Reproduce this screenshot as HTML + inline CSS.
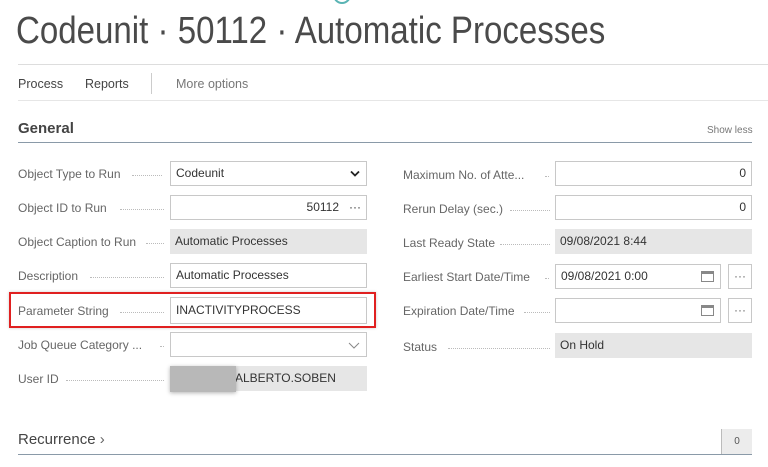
<!DOCTYPE html>
<html><head><style>
*{margin:0;padding:0;box-sizing:border-box}
body{width:768px;height:467px;background:#fff;position:relative;overflow:hidden;font-family:"Liberation Sans",sans-serif;color:#505050}
.a{position:absolute;white-space:nowrap}
.lbl{font-size:12px;color:#666;position:absolute;white-space:nowrap}
.dots{position:absolute;border-bottom:1px dotted #bbb;height:1px}
.in{position:absolute;border:1px solid #c8c8c8;background:#fff;height:25px;font-size:12px;color:#333;line-height:23px;padding:0 5px}
.ro{position:absolute;background:#e6e6e6;height:25px;font-size:12px;color:#333;line-height:25px;padding:0 5px}
.r{text-align:right}
.cal{position:absolute;right:6px;top:6px;width:13px;height:11px;border:1px solid #888;border-top:3px solid #888}
</style></head><body>
<div class="a" style="left:333px;top:-14px;width:18px;height:18px;border:2px solid #5ab4b4;border-radius:50%"></div>
<div class="a" style="left:16px;top:10px;font-size:38px;color:#4a4a4a;transform:scaleX(0.87);transform-origin:0 0">Codeunit · 50112 · Automatic Processes</div>
<div class="a" style="left:18px;top:64px;width:750px;border-top:1px solid #ddd"></div>
<div class="a" style="left:18px;top:77px;font-size:12.5px;color:#444">Process</div>
<div class="a" style="left:85px;top:77px;font-size:12.5px;color:#444">Reports</div>
<div class="a" style="left:151px;top:73px;height:21px;border-left:1px solid #ccc"></div>
<div class="a" style="left:176px;top:77px;font-size:12.5px;color:#777">More options</div>
<div class="a" style="left:18px;top:100px;width:750px;border-top:1px solid #e6e6e6"></div>
<div class="a" style="left:18px;top:120px;font-size:15px;font-weight:bold;color:#444">General</div>
<div class="a" style="left:707px;top:125px;font-size:10px;color:#777">Show less</div>
<div class="a" style="left:18px;top:142px;width:734px;border-top:1px solid #8a9aa8"></div>

<div class="lbl" style="left:18px;top:167px">Object Type to Run</div><div class="dots" style="left:132px;top:175px;width:30px"></div>
<div class="in" style="left:170px;top:161px;width:197px">Codeunit<svg style="position:absolute;right:6px;top:8px" width="10" height="7" viewBox="0 0 10 7"><path d="M1 1.5 L5 5.5 L9 1.5" fill="none" stroke="#222" stroke-width="1.8"/></svg></div>
<div class="lbl" style="left:18px;top:201px">Object ID to Run</div><div class="dots" style="left:120px;top:209px;width:44px"></div>
<div class="in r" style="left:170px;top:195px;width:197px">50112 &nbsp; ···</div>
<div class="lbl" style="left:18px;top:235px">Object Caption to Run</div><div class="dots" style="left:146px;top:243px;width:18px"></div>
<div class="ro" style="left:170px;top:229px;width:197px">Automatic Processes</div>
<div class="lbl" style="left:18px;top:269px">Description</div><div class="dots" style="left:90px;top:277px;width:74px"></div>
<div class="in" style="left:170px;top:263px;width:197px">Automatic Processes</div>
<div class="lbl" style="left:18px;top:304px">Parameter String</div><div class="dots" style="left:120px;top:312px;width:44px"></div>
<div class="in" style="left:170px;top:297px;width:197px;height:27px;line-height:25px">INACTIVITYPROCESS</div>
<div class="a" style="left:9px;top:292px;width:367px;height:36px;border:2px solid #e02020;box-shadow:0 0 3px rgba(0,0,0,.2)"></div>
<div class="lbl" style="left:18px;top:338px">Job Queue Category ...</div><div class="dots" style="left:160px;top:346px;width:4px"></div>
<div class="in" style="left:170px;top:332px;width:197px"><svg style="position:absolute;right:6px;top:9px" width="12" height="7" viewBox="0 0 12 7"><path d="M1 1 L6 6 L11 1" fill="none" stroke="#888" stroke-width="1"/></svg></div>
<div class="lbl" style="left:18px;top:372px">User ID</div><div class="dots" style="left:66px;top:380px;width:98px"></div>
<div class="ro" style="left:170px;top:366px;width:197px;padding-left:65px">ALBERTO.SOBEN</div>
<div class="a" style="left:170px;top:366px;width:66px;height:26px;background:#b8b8b8;box-shadow:0 1px 4px rgba(0,0,0,.3)"></div>

<div class="lbl" style="left:403px;top:168px">Maximum No. of Atte...</div><div class="dots" style="left:545px;top:176px;width:4px"></div>
<div class="in r" style="left:555px;top:161px;width:197px">0</div>
<div class="lbl" style="left:403px;top:202px">Rerun Delay (sec.)</div><div class="dots" style="left:510px;top:210px;width:40px"></div>
<div class="in r" style="left:555px;top:195px;width:197px">0</div>
<div class="lbl" style="left:403px;top:236px">Last Ready State</div><div class="dots" style="left:500px;top:244px;width:50px"></div>
<div class="ro" style="left:555px;top:229px;width:197px">09/08/2021 8:44</div>
<div class="lbl" style="left:403px;top:270px">Earliest Start Date/Time</div><div class="dots" style="left:545px;top:278px;width:4px"></div>
<div class="in" style="left:555px;top:264px;width:166px">09/08/2021 0:00<span class="cal"></span></div>
<div class="in" style="left:728px;top:264px;width:24px;text-align:center;padding:0;color:#666">···</div>
<div class="lbl" style="left:403px;top:304px">Expiration Date/Time</div><div class="dots" style="left:524px;top:312px;width:26px"></div>
<div class="in" style="left:555px;top:298px;width:166px"><span class="cal"></span></div>
<div class="in" style="left:728px;top:298px;width:24px;text-align:center;padding:0;color:#666">···</div>
<div class="lbl" style="left:403px;top:340px">Status</div><div class="dots" style="left:448px;top:348px;width:102px"></div>
<div class="ro" style="left:555px;top:333px;width:197px">On Hold</div>

<div class="a" style="left:18px;top:431px;font-size:15px;color:#444">Recurrence<span style="color:#666;font-weight:300"> &#8250;</span></div>
<div class="a" style="left:18px;top:454px;width:734px;border-top:1px solid #8a9aa8"></div>
<div class="a" style="left:721px;top:429px;width:31px;height:25px;background:#ececec;border-left:1px solid #bbb;font-size:10px;text-align:center;line-height:25px;color:#555">0</div>
</body></html>
